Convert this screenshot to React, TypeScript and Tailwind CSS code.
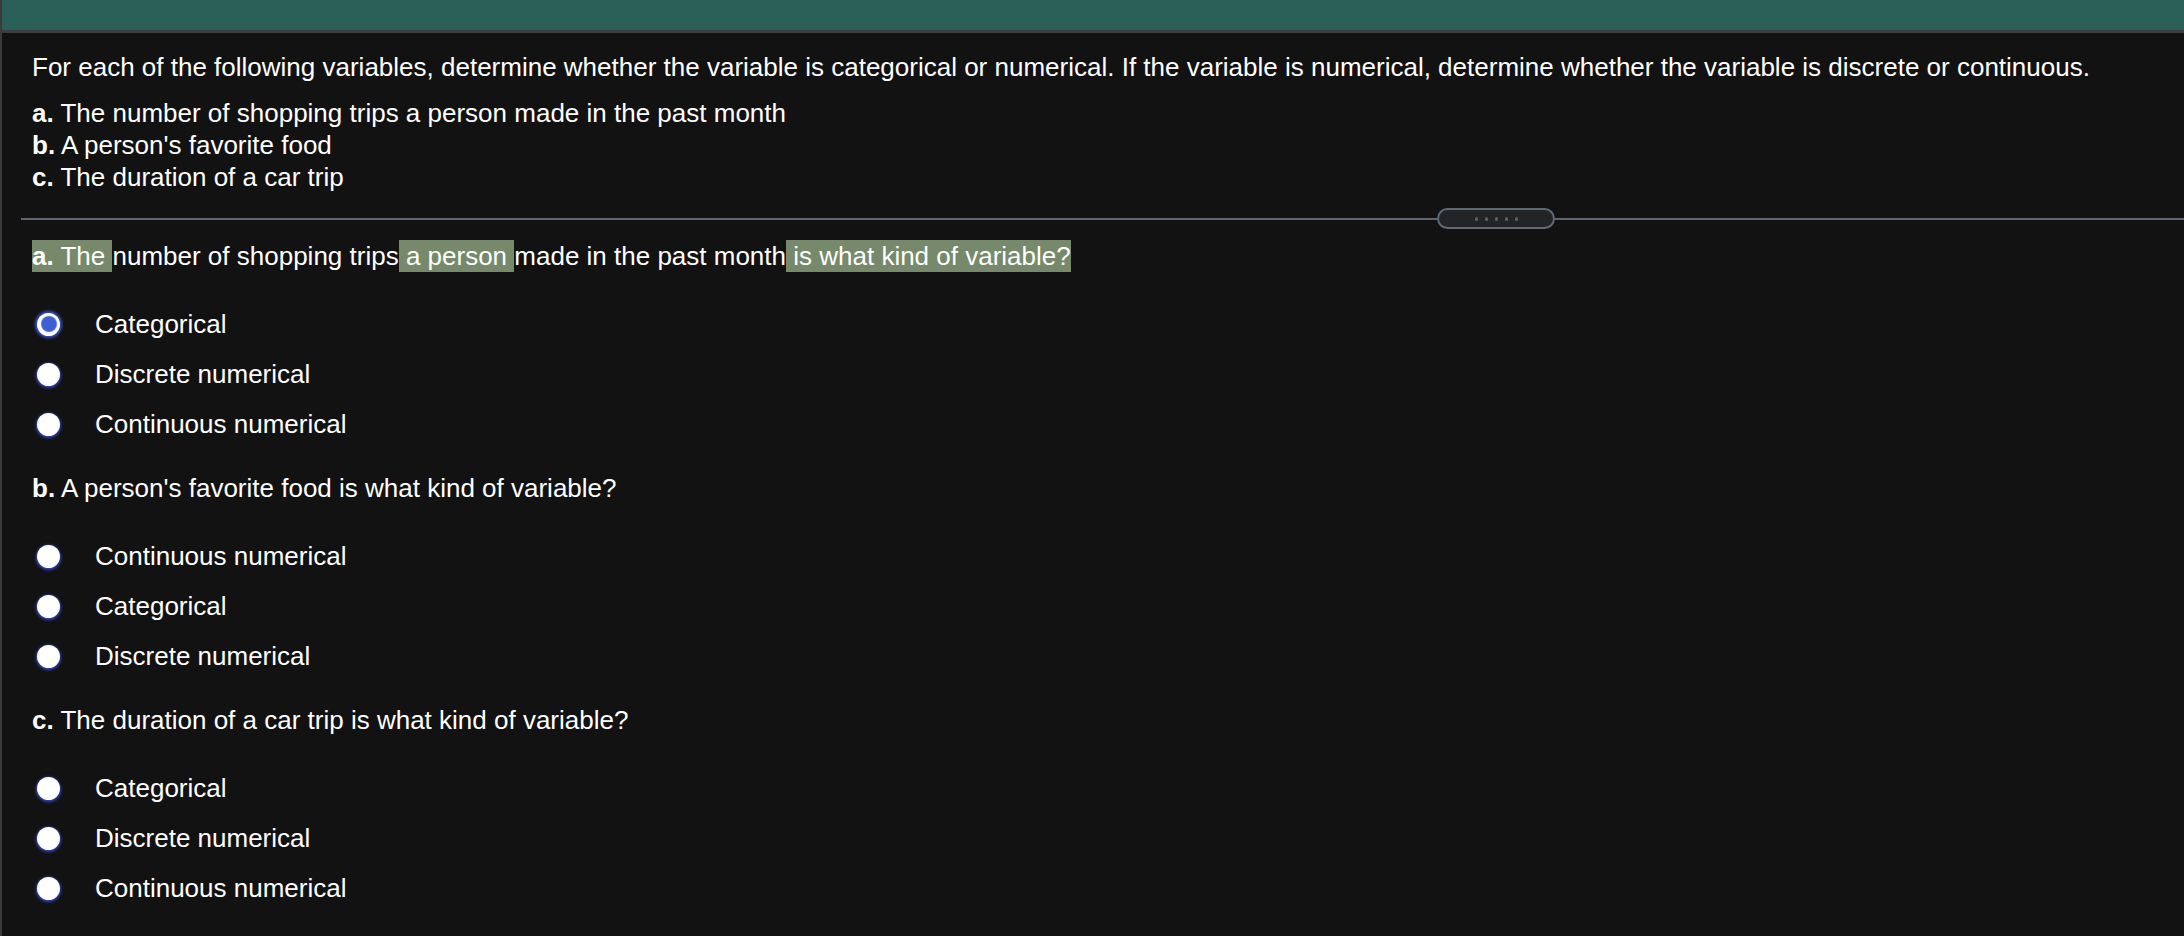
import type { ReactNode } from 'react'

type Question = {
  letter: string
  body: ReactNode
  options: string[]
  selected?: number
}

const FONT = { fontFamily: '"Liberation Sans", Arial, Helvetica, sans-serif' }

// ── Radio ────────────────────────

function Radio({ checked }: { checked?: boolean }) {
  if (checked) {
    return (
      <span className="flex h-[23px] w-[23px] shrink-0 items-center justify-center rounded-full bg-white shadow-[0_0_3px_2px_#3b55c9]">
        <span className="h-[14px] w-[14px] rounded-full bg-[#3d5fd4] shadow-[0_0_1px_1px_#4a66d6]" />
      </span>
    )
  }
  return (
    <span className="h-[23px] w-[23px] shrink-0 rounded-full bg-white shadow-[0_1px_3px_1px_#3447c0]" />
  )
}

function Hl({ children }: { children: ReactNode }) {
  return (
    <span className="inline-block h-[32px] whitespace-pre bg-[#76896a] align-top leading-[32px]">
      {children}
    </span>
  )
}

const QUESTIONS: Question[] = [
  {
    letter: 'a.',
    body: null,
    options: ['Categorical', 'Discrete numerical', 'Continuous numerical'],
    selected: 0,
  },
  {
    letter: 'b.',
    body: " A person's favorite food is what kind of variable?",
    options: ['Continuous numerical', 'Categorical', 'Discrete numerical'],
  },
  {
    letter: 'c.',
    body: ' The duration of a car trip is what kind of variable?',
    options: ['Categorical', 'Discrete numerical', 'Continuous numerical'],
  },
]

function QuestionA() {
  return (
    <p className="h-[32px] whitespace-pre leading-[32px]">
      <Hl>
        <b>a.</b> The{' '}
      </Hl>
      number of shopping trips
      <Hl> a person </Hl>
      made in the past month
      <Hl> is what kind of variable?</Hl>
    </p>
  )
}

function QuestionBlock({ q }: { q: Question }) {
  return (
    <div className="mb-[23px]">
      {q.letter === 'a.' ? (
        <QuestionA />
      ) : (
        <p className="h-[32px] whitespace-pre leading-[32px]">
          <b>{q.letter}</b>
          {q.body}
        </p>
      )}
      <div className="mt-[27px] flex flex-col pl-[5px]">
        {q.options.map((opt, i) => (
          <div key={opt} className="flex h-[50px] items-center">
            <Radio checked={q.selected === i} />
            <span className="ml-[35px] leading-[32px]">{opt}</span>
          </div>
        ))}
      </div>
    </div>
  )
}

export default function App() {
  return (
    <div
      className="flex h-[936px] w-full flex-col overflow-hidden border-l-2 border-[#3a3a3a] bg-[#121212] text-[26px] text-white"
      style={FONT}
    >
      {/* ── Top bar ── */}
      <div className="h-[33px] shrink-0 border-b-[3px] border-[#3c3f42] bg-[#2a5f58]" />

      {/* ── Intro ── */}
      <div className="pl-[30px] pt-[18px]">
        <p className="whitespace-nowrap leading-[32px]">
          For each of the following variables, determine whether the variable is categorical or numerical. If the
          variable is numerical, determine whether the variable is discrete or continuous.
        </p>
        <div className="mt-[14px] leading-[32px]">
          <p>
            <b>a.</b> The number of shopping trips a person made in the past month
          </p>
          <p>
            <b>b.</b> A person's favorite food
          </p>
          <p>
            <b>c.</b> The duration of a car trip
          </p>
        </div>
      </div>

      {/* ── Divider with drag handle ── */}
      <div className="ml-[19px] mt-[15px] flex h-[21px] items-center">
        <div className="h-[2px] w-[1416px] shrink-0 bg-[#5d6670]" />
        <div className="flex h-[21px] w-[118px] shrink-0 items-center justify-center gap-[7px] rounded-full border-2 border-[#5e6a76] bg-[#222427]">
          {[0, 1, 2, 3, 4].map((d) => (
            <span key={d} className="h-[4px] w-[3px] rounded-full bg-[#5c6066]" />
          ))}
        </div>
        <div className="h-[2px] flex-1 bg-[#5d6670]" />
      </div>

      {/* ── Questions ── */}
      <div className="pl-[30px] pt-[11px]">
        {QUESTIONS.map((q) => (
          <QuestionBlock key={q.letter} q={q} />
        ))}
      </div>
    </div>
  )
}
